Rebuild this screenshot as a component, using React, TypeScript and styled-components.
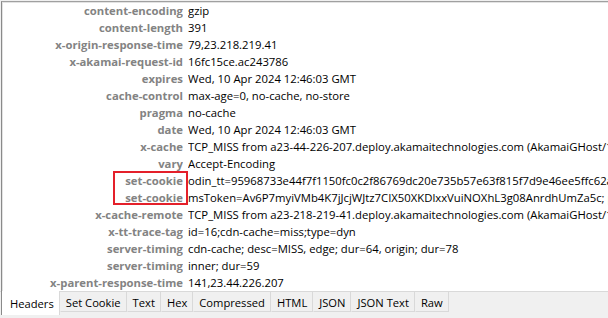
import React from "react";
import styled, { createGlobalStyle } from "styled-components";

const GlobalStyle = createGlobalStyle`
  html, body {
    margin: 0;
    padding: 0;
    background: #f0f0f0;
  }
  body {
    font-family: "Open Sans", "Noto Sans", "Liberation Sans", sans-serif;
    font-size: 11.3px;
  }
`;

const Window = styled.div`
  width: 608px;
  height: 318px;
  background: #f0f0f0;
  overflow: hidden;
  display: flex;
  flex-direction: column;
`;

const Panel = styled.div`
  margin: 1px 0 0 1px;
  background: #ffffff;
  border-top: 1px solid #a0a0a0;
  border-left: 1px solid #8a8a8a;
  box-shadow: inset 1px 1px 0 #e3e3e3;
  height: 289px;
  display: flex;
  flex-direction: column;
  overflow: hidden;
`;

const Row = styled.div`
  display: grid;
  grid-template-columns: 181px 1fr;
  column-gap: 5px;
  height: 17px;
  line-height: 17px;
  white-space: nowrap;
`;

const Key = styled.div`
  text-align: right;
  color: #838383;
  font-weight: 700;
  overflow: hidden;
`;

const Value = styled.div`
  color: #000000;
  overflow: hidden;
`;

const Highlight = styled.div`
  position: relative;
`;

const Annotation = styled.div`
  position: absolute;
  left: 111px;
  top: -1px;
  width: 75px;
  height: 34px;
  box-sizing: border-box;
  border: 2px solid #e4202a;
  pointer-events: none;
`;

const TabStrip = styled.div`
  display: flex;
  align-items: flex-start;
  border-top: 1px solid #d9d9d9;
  padding-left: 1px;
  height: 26px;
`;

const Tab = styled.div<{ $active?: boolean }>`
  box-sizing: border-box;
  padding: ${(p) => (p.$active ? "4px 5px 0 8px" : "2px 5px 0 5px")};
  height: ${(p) => (p.$active ? "24px" : "20px")};
  margin-top: ${(p) => (p.$active ? "-1px" : "0")};
  line-height: 18px;
  background: ${(p) => (p.$active ? "#ffffff" : "#f0f0f0")};
  border-left: 1px solid ${(p) => (p.$active ? "#8a8a8a" : "transparent")};
  border-right: 1px solid #d9d9d9;
  border-bottom: ${(p) => (p.$active ? "none" : "1px solid #d9d9d9")};
  color: #000000;
  font-size: 11.2px;
  white-space: nowrap;
`;

const headers: [string, string][] = [
  ["content-encoding", "gzip"],
  ["content-length", "391"],
  ["x-origin-response-time", "79,23.218.219.41"],
  ["x-akamai-request-id", "16fc15ce.ac243786"],
  ["expires", "Wed, 10 Apr 2024 12:46:03 GMT"],
  ["cache-control", "max-age=0, no-cache, no-store"],
  ["pragma", "no-cache"],
  ["date", "Wed, 10 Apr 2024 12:46:03 GMT"],
  ["x-cache", "TCP_MISS from a23-44-226-207.deploy.akamaitechnologies.com (AkamaiGHost/11.4.3-54729273) (-)"],
  ["vary", "Accept-Encoding"],
];

const cookies: [string, string][] = [
  ["set-cookie", "odin_tt=95968733e44f7f1150fc0c2f86769dc20e735b57e63f815f7d9e46ee5ffc62afb; path=/"],
  ["set-cookie", "msToken=Av6P7myiVMb4K7jJcjWJtz7CIX50XKDlxxVuiNOXhL3g08AnrdhUmZa5c; path=/"],
];

const rest: [string, string][] = [
  ["x-cache-remote", "TCP_MISS from a23-218-219-41.deploy.akamaitechnologies.com (AkamaiGHost/11.4.3-54729273) (-)"],
  ["x-tt-trace-tag", "id=16;cdn-cache=miss;type=dyn"],
  ["server-timing", "cdn-cache; desc=MISS, edge; dur=64, origin; dur=78"],
  ["server-timing", "inner; dur=59"],
  ["x-parent-response-time", "141,23.44.226.207"],
];

const tabs = ["Headers", "Set Cookie", "Text", "Hex", "Compressed", "HTML", "JSON", "JSON Text", "Raw"];

const HeaderRow = ({ k, v }: { k: string; v: string }) => (
  <Row>
    <Key>{k}</Key>
    <Value>{v}</Value>
  </Row>
);

export default function App() {
  return (
    <>
      <GlobalStyle />
      <Window>
        <Panel>
          {headers.map(([k, v], i) => (
            <HeaderRow key={"h" + i} k={k} v={v} />
          ))}
          <Highlight>
            {cookies.map(([k, v], i) => (
              <HeaderRow key={"c" + i} k={k} v={v} />
            ))}
            <Annotation />
          </Highlight>
          {rest.map(([k, v], i) => (
            <HeaderRow key={"r" + i} k={k} v={v} />
          ))}
        </Panel>
        <TabStrip>
          {tabs.map((t, i) => (
            <Tab key={t} $active={i === 0}>
              {t}
            </Tab>
          ))}
        </TabStrip>
      </Window>
    </>
  );
}
